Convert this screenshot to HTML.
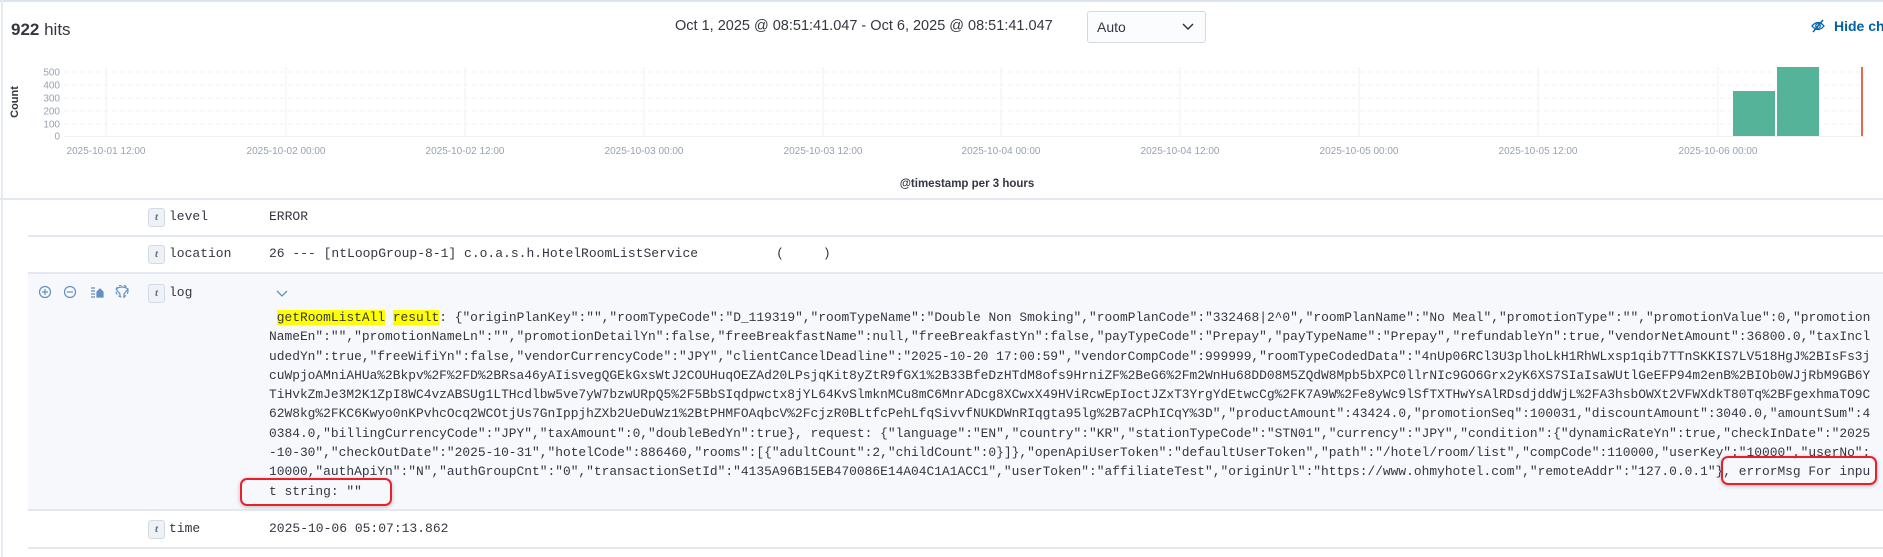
<!DOCTYPE html>
<html><head><meta charset="utf-8"><style>
html,body{margin:0;padding:0;width:1883px;height:557px;overflow:hidden;background:#fff;font-family:"Liberation Sans",sans-serif;color:#343741}
.abs{position:absolute}
.mono{font-family:"Liberation Mono",monospace;font-size:12.9px;white-space:pre;line-height:19.3px}
.hl{background:#ffff00}
.badge{position:absolute;left:148px;width:15px;height:17px;background:#eef1f6;border:1px solid #d3dae6;border-radius:3px;font:italic bold 11px "Liberation Serif",serif;color:#69707d;text-align:center;line-height:17px}
.fname{position:absolute;left:169px;font-family:"Liberation Mono",monospace;font-size:13px}
.val{position:absolute;left:269px;font-family:"Liberation Mono",monospace;font-size:13px;white-space:pre}
.div{position:absolute;left:28px;right:0;height:2px;background:#e3e8f0}
.box{position:absolute;border:2px solid #e8202a;border-radius:7px;box-shadow:0 1px 4px rgba(0,0,0,.25)}
</style></head><body>
<div class="abs" style="left:0;top:0;width:1883px;height:2px;background:#dde3ec"></div>
<div class="abs" style="left:1px;top:0;width:2px;height:557px;background:#e6ebf2"></div>

<div class="abs" style="left:11px;top:20px;font-size:17px"><b>922</b> hits</div>
<div class="abs" style="left:675px;top:18px;font-size:14.5px;color:#343741">Oct 1, 2025 @ 08:51:41.047 - Oct 6, 2025 @ 08:51:41.047</div>
<div class="abs" style="left:1087px;top:11px;width:119px;height:32px;border:1px solid #d3dae6;border-radius:3px;background:#fbfcfd;box-sizing:border-box"></div>
<div class="abs" style="left:1097px;top:19px;font-size:14px">Auto</div>
<svg class="abs" style="left:1182px;top:22px" width="12" height="10"><path d="M1 2 L6 7 L11 2" stroke="#343741" stroke-width="1.5" fill="none"/></svg>
<svg class="abs" style="left:1810px;top:18px" width="16" height="16"><path d="M2 8 Q8 1 14 8 Q8 15 2 8Z" stroke="#0061a6" stroke-width="1.3" fill="none"/><circle cx="8" cy="8" r="2.3" stroke="#0061a6" stroke-width="1.2" fill="none"/><path d="M3 14 L13 2" stroke="#0061a6" stroke-width="1.4"/></svg>
<div class="abs" style="left:1834px;top:18px;font-size:14px;font-weight:bold;color:#0061a6;white-space:nowrap">Hide chart</div>

<svg class="abs" style="left:0;top:55px" width="1883" height="140">
<g font-family="Liberation Sans" font-size="10" fill="#98a2b3" text-anchor="end">
<text x="60" y="20.5">500</text><text x="60" y="33.5">400</text><text x="60" y="46.5">300</text><text x="60" y="59.5">200</text><text x="60" y="72.5">100</text><text x="60" y="84.5">0</text></g>
<g stroke="#eef0f4" stroke-dasharray="4,4" stroke-width="1">
<line x1="64" x2="1865" y1="17" y2="17"/><line x1="64" x2="1865" y1="30" y2="30"/><line x1="64" x2="1865" y1="43" y2="43"/><line x1="64" x2="1865" y1="56" y2="56"/><line x1="64" x2="1865" y1="69" y2="69"/></g>
<g stroke="#f0f2f5" stroke-width="1">
<line x1="106" x2="106" y1="12" y2="81"/><line x1="286" x2="286" y1="12" y2="81"/><line x1="465" x2="465" y1="12" y2="81"/><line x1="644" x2="644" y1="12" y2="81"/><line x1="823" x2="823" y1="12" y2="81"/><line x1="1001" x2="1001" y1="12" y2="81"/><line x1="1180" x2="1180" y1="12" y2="81"/><line x1="1359" x2="1359" y1="12" y2="81"/><line x1="1538" x2="1538" y1="12" y2="81"/><line x1="1718" x2="1718" y1="12" y2="81"/></g>
<line x1="64" x2="1865" y1="81.5" y2="81.5" stroke="#eef0f4"/>
<rect x="1733" y="36" width="42" height="45" fill="#54b399"/>
<rect x="1777" y="12" width="42" height="69" fill="#54b399"/>
<line x1="1862" x2="1862" y1="12" y2="81" stroke="#e7664c" stroke-width="2"/>
<g font-family="Liberation Sans" font-size="10" fill="#98a2b3" text-anchor="middle">
<text x="106" y="99">2025-10-01 12:00</text><text x="286" y="99">2025-10-02 00:00</text><text x="465" y="99">2025-10-02 12:00</text><text x="644" y="99">2025-10-03 00:00</text><text x="823" y="99">2025-10-03 12:00</text><text x="1001" y="99">2025-10-04 00:00</text><text x="1180" y="99">2025-10-04 12:00</text><text x="1359" y="99">2025-10-05 00:00</text><text x="1538" y="99">2025-10-05 12:00</text><text x="1718" y="99">2025-10-06 00:00</text></g>
<text x="967" y="132" font-family="Liberation Sans" font-size="11.5" font-weight="bold" fill="#343741" text-anchor="middle">@timestamp per 3 hours</text>
<text transform="translate(18,47) rotate(-90)" font-family="Liberation Sans" font-size="11" font-weight="bold" fill="#343741" text-anchor="middle">Count</text>
</svg>

<div class="abs" style="left:0;top:198px;width:1883px;height:2px;background:#e3e8f0"></div>

<div class="badge" style="top:208px">t</div><div class="fname" style="top:209px">level</div><div class="val" style="top:209px">ERROR</div>
<div class="div" style="top:235px"></div>
<div class="badge" style="top:245px">t</div><div class="fname" style="top:246px">location</div><div class="val" style="top:246px">26 --- [ntLoopGroup-8-1] c.o.a.s.h.HotelRoomListService          (     )</div>
<div class="abs" style="left:28px;top:273px;right:0;height:236px;background:#f7f8fc"></div>
<div class="div" style="top:272px"></div>
<svg class="abs" style="left:36px;top:285px" width="100" height="16" fill="none" stroke="#6092c0" stroke-width="1.2">
<circle cx="9" cy="7" r="5.5"/><path d="M6 7h6M9 4v6"/>
<circle cx="34" cy="7" r="5.5"/><path d="M31 7h6"/>
<path d="M55 3h4M55 6h4M55 9h4M55 12h4" stroke-width="1.3"/><path d="M61 7l3-3 3 3v5h-6z" fill="#6092c0"/>
<path d="M80 4 Q86 0 92 4 L88 9 v4 M80 4 L84 9 v3" /><circle cx="86" cy="6" r="6" stroke-dasharray="3,2"/>
</svg>
<div class="badge" style="top:284px">t</div><div class="fname" style="top:285px">log</div>
<svg class="abs" style="left:276px;top:290px" width="12" height="8"><path d="M1 1 L6 6 L11 1" stroke="#6092c0" stroke-width="1.3" fill="none"/></svg>
<div class="abs mono" style="left:269px;top:308px"> <span class="hl">getRoomListAll</span> <span class="hl">result</span>: {"originPlanKey":"","roomTypeCode":"D_119319","roomTypeName":"Double Non Smoking","roomPlanCode":"332468|2^0","roomPlanName":"No Meal","promotionType":"","promotionValue":0,"promotion
NameEn":"","promotionNameLn":"","promotionDetailYn":false,"freeBreakfastName":null,"freeBreakfastYn":false,"payTypeCode":"Prepay","payTypeName":"Prepay","refundableYn":true,"vendorNetAmount":36800.0,"taxIncl
udedYn":true,"freeWifiYn":false,"vendorCurrencyCode":"JPY","clientCancelDeadline":"2025-10-20 17:00:59","vendorCompCode":999999,"roomTypeCodedData":"4nUp06RCl3U3plhoLkH1RhWLxsp1qib7TTnSKKIS7LV518HgJ%2BIsFs3j
cuWpjoAMniAHUa%2Bkpv%2F%2FD%2BRsa46yAIisvegQGEkGxsWtJ2COUHuqOEZAd20LPsjqKit8yZtR9fGX1%2B33BfeDzHTdM8ofs9HrniZF%2BeG6%2Fm2WnHu68DD08M5ZQdW8Mpb5bXPC0llrNIc9GO6Grx2yK6XS7SIaIsaWUtlGeEFP94m2enB%2BIOb0WJjRbM9GB6Y
TiHvkZmJe3M2K1ZpI8WC4vzABSUg1LTHcdlbw5ve7yW7bzwURpQ5%2F5BbSIqdpwctx8jYL64KvSlmknMCu8mC6MnrADcg8XCwxX49HViRcwEpIoctJZxT3YrgYdEtwcCg%2FK7A9W%2Fe8yWc9lSfTXTHwYsAlRDsdjddWjL%2FA3hsbOWXt2VFWXdkT80Tq%2BFgexhmaTO9C
62W8kg%2FKC6Kwyo0nKPvhcOcq2WCOtjUs7GnIppjhZXb2UeDuWz1%2BtPHMFOAqbcV%2FcjzR0BLtfcPehLfqSivvfNUKDWnRIqgta95lg%2B7aCPhICqY%3D","productAmount":43424.0,"promotionSeq":100031,"discountAmount":3040.0,"amountSum":4
0384.0,"billingCurrencyCode":"JPY","taxAmount":0,"doubleBedYn":true}, request: {"language":"EN","country":"KR","stationTypeCode":"STN01","currency":"JPY","condition":{"dynamicRateYn":true,"checkInDate":"2025
-10-30","checkOutDate":"2025-10-31","hotelCode":886460,"rooms":[{"adultCount":2,"childCount":0}]},"openApiUserToken":"defaultUserToken","path":"/hotel/room/list","compCode":110000,"userKey":"10000","userNo":
10000,"authApiYn":"N","authGroupCnt":"0","transactionSetId":"4135A96B15EB470086E14A04C1A1ACC1","userToken":"affiliateTest","originUrl":"https://www.ohmyhotel.com","remoteAddr":"127.0.0.1"}, errorMsg For inpu
t string: ""</div>
<div class="box" style="left:240px;top:478px;width:148px;height:24px"></div>
<div class="box" style="left:1721px;top:456px;width:152px;height:25px"></div>
<div class="div" style="top:509px"></div>
<div class="badge" style="top:520px">t</div><div class="fname" style="top:521px">time</div><div class="val" style="top:521px">2025-10-06 05:07:13.862</div>
<div class="div" style="top:547px"></div>
</body></html>
